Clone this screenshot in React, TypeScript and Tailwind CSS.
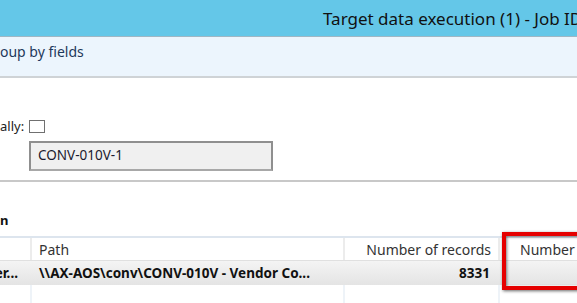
import React from "react";

const font = { fontFamily: '"Noto Sans", "Open Sans", sans-serif' };

export default function App() {
  return (
    <div className="w-[577px] h-[303px] overflow-hidden bg-white relative" style={font}>
      {/* Title bar */}
      <div className="h-[37px] bg-[#64c7e8] border-b border-[#9fb7c4] flex items-center pl-[323px] whitespace-nowrap overflow-hidden">
        <span className="text-[17px] text-[#111] leading-none">Target data execution (1) - Job ID</span>
      </div>
      {/* Ribbon */}
      <div className="h-[41px] bg-[#ecf5fd] border-b-2 border-[#cfd3d6] flex items-center">
        <span className="text-[14px] text-[#1e395b] leading-none -mt-[9px]">oup by fields</span>
      </div>
      {/* Form area */}
      <div className="h-[104px] border-b-2 border-[#c8c8c8] flex flex-col pt-[41px]">
        <div className="flex items-center h-[14px]">
          <span className="w-[29px] text-[13px] text-[#222] leading-none">ally:</span>
          <div className="w-[16px] h-[13px] border border-[#707070] bg-white"></div>
        </div>
        <div className="ml-[29px] mt-[8px] w-[244px] h-[30px] bg-[#f0f0f0] border-2 border-[#8f8f8f] border-b-[#a8a8a8] flex items-center pl-[7px]">
          <span className="text-[13.5px] text-[#1a1a2e] leading-none">CONV-010V-1</span>
        </div>
      </div>
      {/* Section heading */}
      <div className="h-[54px] flex items-end pb-[9px]">
        <span className="text-[13px] font-bold text-[#111] leading-none">n</span>
      </div>
      {/* Grid */}
      <div className="border-t-2 border-[#dde5ee]">
        <div className="grid grid-cols-[32px_313px_155px_77px] h-[22px] text-[14px] text-[#333]">
          <div className="border-r-2 border-[#ececec]"></div>
          <div className="border-r-2 border-[#ececec] flex items-center pl-[7px]">Path</div>
          <div className="border-r-2 border-[#ececec] flex items-center justify-end pr-[7px]">Number of records</div>
          <div className="flex items-center pl-[20px] whitespace-nowrap">Number</div>
        </div>
        <div className="grid grid-cols-[32px_313px_155px_77px] h-[25px] text-[13.5px] font-bold text-[#111] bg-gradient-to-b from-[#f4f4f4] to-[#e4e4e4] border-t border-[#e0e0e0]">
          <div className="flex items-center justify-end pr-[14px] overflow-hidden whitespace-nowrap">er...</div>
          <div className="flex items-center pl-[7px] whitespace-nowrap overflow-hidden">\\AX-AOS\conv\CONV-010V - Vendor Co...</div>
          <div className="flex items-center justify-end pr-[10px]">8331</div>
          <div></div>
        </div>
        <div className="grid grid-cols-[32px_313px_155px_77px] h-[30px]">
          <div className="border-r-2 border-[#eef3f8]"></div>
          <div className="border-r-2 border-[#eef3f8]"></div>
          <div className="border-r-2 border-[#eef3f8]"></div>
          <div></div>
        </div>
      </div>
      {/* Red highlight box */}
      <div className="absolute left-[502px] top-[232px] w-[90px] h-[58px] border-[4px] border-[#e50000] shadow-[1px_1px_3px_rgba(0,0,0,0.6),inset_1px_1px_3px_rgba(0,0,0,0.5)]"></div>
    </div>
  );
}
